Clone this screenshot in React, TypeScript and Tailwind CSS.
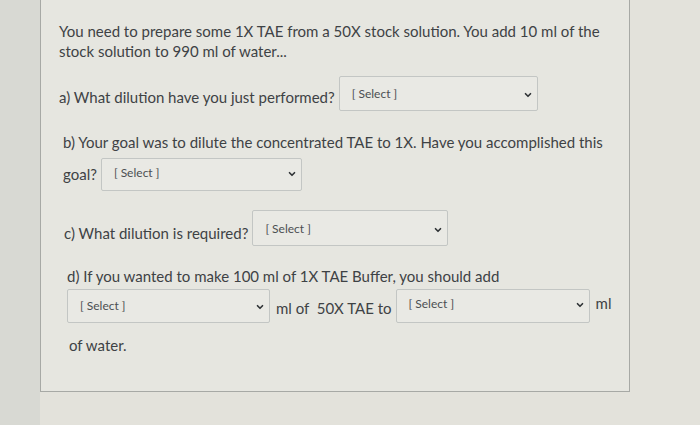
import React from 'react';
import { ChevronDown } from 'lucide-react';

interface SelectBoxProps {
  width: string;
  height?: string;
  textTop?: string;
}

const SelectBox: React.FC<SelectBoxProps> = ({ width, height = 'h-[34px]', textTop = 'pt-[7px]' }) => {
  return (
    <div
      className={`${width} ${height} ${textTop} shrink-0 flex items-start justify-between pl-[12px] pr-[4px] border border-[#c3c6c4] bg-[#e9e9e4] rounded-[2px]`}
    >
      <span className="text-[12px] leading-[20px] text-[#4c4f52]">[ Select ]</span>
      <ChevronDown className="mt-[6px] h-[10px] w-[10px] text-[#2f3336]" strokeWidth={4} />
    </div>
  );
};

export default function App() {
  return (
    <div
      className="w-[700px] h-[425px] overflow-hidden flex bg-[#e3e2db] text-[#3e4245]"
      style={{ fontFamily: 'Lato, "Open Sans", sans-serif' }}
    >
      {/* strip left of the quiz card */}
      <div className="w-[40px] h-[425px] shrink-0 bg-[#d8d9d3]" />

      <div className="w-[590px] shrink-0 flex flex-col">
        <div className="h-[392px] border-l border-r border-b border-[#a7a9a5] bg-[#e6e6e0] pl-[18px] pt-[21px] text-[15px] leading-[20px]">
          <p className="w-[560px]">
            You need to prepare some 1X TAE from a 50X stock solution. You add 10 ml of the stock solution to 990 ml of
            water...
          </p>

          {/* a) */}
          <div className="mt-[15px] flex items-start gap-[4px]">
            <span className="mt-[11px]">a) What dilution have you just performed?</span>
            <SelectBox width="w-[199px]" height="h-[35px]" textTop="pt-[7px]" />
          </div>

          {/* b) */}
          <p className="mt-[21px] ml-[4px] w-[556px]">
            b) Your goal was to dilute the concentrated TAE to 1X. Have you accomplished this
          </p>
          <div className="mt-[6px] ml-[4px] flex items-start gap-[4px]">
            <span className="mt-[6px]">goal?</span>
            <SelectBox width="w-[201px]" height="h-[33px]" textTop="pt-[4px]" />
          </div>

          {/* c) */}
          <div className="mt-[19px] ml-[5px] flex items-start gap-[4px]">
            <span className="mt-[13px]">c) What dilution is required?</span>
            <SelectBox width="w-[196px]" height="h-[36px]" textTop="pt-[8px]" />
          </div>

          {/* d) */}
          <p className="mt-[20px] ml-[8px]">d) If you wanted to make 100 ml of 1X TAE Buffer, you should add</p>
          <div className="mt-[3px] ml-[8px] flex items-start">
            <SelectBox width="w-[203px]" height="h-[34px]" textTop="pt-[6px]" />
            <span className="mt-[9px] ml-[6px] mr-[4px] whitespace-pre">ml of  50X TAE to</span>
            <SelectBox width="w-[194px]" height="h-[34px]" textTop="pt-[4px]" />
            <span className="mt-[4px] ml-[6px]">ml</span>
          </div>
          <p className="mt-[12px] ml-[10px]">of water.</p>
        </div>
      </div>
    </div>
  );
}
